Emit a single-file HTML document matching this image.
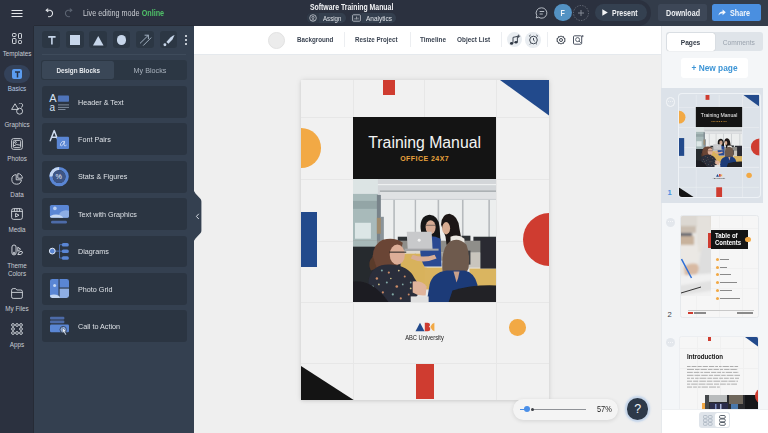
<!DOCTYPE html>
<html><head><meta charset="utf-8">
<style>
*{box-sizing:border-box;margin:0;padding:0}
html,body{width:768px;height:433px;overflow:hidden;background:#ececec;font-family:"Liberation Sans",sans-serif}
.a{position:absolute}
.t{position:absolute;white-space:nowrap;line-height:1}
.sx{display:inline-block;transform-origin:0 50%}
#top{left:0;top:0;width:768px;height:26px;background:#333c4a}
#topl{left:-20px;top:0;width:671px;height:26px;background:#2b313f;border-radius:0 13px 13px 0}
#side{left:0;top:26px;width:34px;height:407px;background:#2b313f}
#panel{left:34px;top:26px;width:160px;height:407px;background:#344050}
#toolbar{left:194px;top:26px;width:467px;height:29px;background:#fff;border-bottom:1px solid #e5e9ed}
#canvas{left:194px;top:55px;width:467px;height:378px;background:#efefef}
#right{left:661px;top:26px;width:107px;height:407px;background:#f4f6f8;border-left:1px solid #e6e9ec}
</style></head><body>
<div id="top" class="a"></div>
<div id="topl" class="a"></div>

<!-- TOP BAR -->
<svg class="a" style="left:11px;top:9px" width="12" height="9" viewBox="0 0 12 9"><g stroke="#e4e7eb" stroke-width="1"><line x1="0.5" y1="1.5" x2="11.5" y2="1.5"/><line x1="0.5" y1="4.5" x2="11.5" y2="4.5"/><line x1="0.5" y1="7.5" x2="11.5" y2="7.5"/></g></svg>
<svg class="a" style="left:45px;top:8px" width="10" height="10" viewBox="0 0 10 10"><path d="M1.5 2.2 H5.2 A3.2 3.2 0 1 1 3.2 8.6" fill="none" stroke="#e3e6ea" stroke-width="1.1"/><path d="M3.2 0.6 L1.2 2.2 L3.2 3.8" fill="none" stroke="#e3e6ea" stroke-width="1.1"/></svg>
<svg class="a" style="left:63px;top:8px" width="10" height="10" viewBox="0 0 10 10"><path d="M8.5 2.2 H4.8 A3.2 3.2 0 1 0 6.8 8.6" fill="none" stroke="#5d6573" stroke-width="1.1"/><path d="M6.8 0.6 L8.8 2.2 L6.8 3.8" fill="none" stroke="#5d6573" stroke-width="1.1"/></svg>
<div class="t" style="left:82.5px;top:9.2px;font-size:8.5px;color:#c9ccd2"><span class="sx" style="transform:scaleX(0.85)">Live editing mode <b style="color:#4fbf68;font-weight:700">Online</b></span></div>
<div class="t" style="left:309.5px;top:4px;font-size:8.2px;font-weight:700;color:#f2f3f5"><span class="sx" style="transform:scaleX(0.84)">Software Training Manual</span></div>
<div class="a" style="left:307px;top:13px;width:39px;height:10px;border-radius:5px;background:#343f4e"></div>
<div class="a" style="left:307px;top:13px;width:12px;height:10px;border-radius:5px 0 0 5px;background:#2f3947"></div>
<svg class="a" style="left:309px;top:14px" width="8" height="8" viewBox="0 0 8 8"><circle cx="4" cy="4" r="3.3" fill="none" stroke="#c8ccd3" stroke-width="0.8"/><circle cx="4" cy="3.4" r="1.1" fill="none" stroke="#c8ccd3" stroke-width="0.7"/><path d="M2.4 6.4 Q4 4.6 5.6 6.4" fill="none" stroke="#c8ccd3" stroke-width="0.7"/></svg>
<div class="t" style="left:322.5px;top:15px;font-size:7.4px;color:#dfe2e7"><span class="sx" style="transform:scaleX(0.83)">Assign</span></div>
<div class="a" style="left:350px;top:13px;width:46px;height:10px;border-radius:5px;background:#343f4e"></div>
<div class="a" style="left:350px;top:13px;width:12px;height:10px;border-radius:5px 0 0 5px;background:#2f3947"></div>
<svg class="a" style="left:352px;top:14px" width="9" height="8" viewBox="0 0 9 8"><rect x="0.6" y="0.8" width="7.8" height="6.4" rx="0.8" fill="none" stroke="#c8ccd3" stroke-width="0.8"/><path d="M3 5.5V4 M4.5 5.5V2.6 M6 5.5V3.6" stroke="#c8ccd3" stroke-width="0.7"/></svg>
<div class="t" style="left:365.8px;top:15px;font-size:7.4px;color:#dfe2e7"><span class="sx" style="transform:scaleX(0.88)">Analytics</span></div>
<svg class="a" style="left:535px;top:6.5px" width="13" height="12" viewBox="0 0 13 12"><path d="M6.5 0.8 A5.2 5.2 0 1 1 3.6 10.2 L1.2 11 L1.8 8.6 A5.2 5.2 0 0 1 6.5 0.8Z" fill="none" stroke="#c3c8d0" stroke-width="0.9"/><path d="M4.6 4.5H9.2 M4.6 7H7.8" stroke="#c3c8d0" stroke-width="0.9"/></svg>
<div class="a" style="left:554.1px;top:3.9px;width:17.5px;height:17.5px;border-radius:50%;background:#5392c3"></div>
<div class="t" style="left:554.1px;top:9.2px;width:17.5px;text-align:center;font-size:8.3px;font-weight:700;color:#eef3f8"><span class="sx" style="transform:scaleX(0.85);transform-origin:50% 50%">F</span></div>
<svg class="a" style="left:573px;top:5px" width="16" height="16" viewBox="0 0 16 16"><circle cx="8" cy="8" r="7.5" fill="none" stroke="#767c87" stroke-width="0.9" stroke-dasharray="1.2 1.4"/><path d="M8 5V11M5 8H11" stroke="#858b96" stroke-width="1"/></svg>
<div class="a" style="left:594.5px;top:3.8px;width:52px;height:17.4px;border-radius:9px;background:#344050"></div>
<svg class="a" style="left:602px;top:9px" width="6" height="7" viewBox="0 0 6 7"><path d="M0.3 0.2 L5.8 3.5 L0.3 6.8Z" fill="#f4f5f7"/></svg>
<div class="t" style="left:612.2px;top:9px;font-size:8.4px;font-weight:700;color:#eef0f3"><span class="sx" style="transform:scaleX(0.83)">Present</span></div>
<div class="a" style="left:658px;top:4px;width:49px;height:17.2px;border-radius:2.5px;background:#3d4757"></div>
<div class="t" style="left:665.6px;top:9px;font-size:8.4px;font-weight:700;color:#eef0f3"><span class="sx" style="transform:scaleX(0.85)">Download</span></div>
<div class="a" style="left:711.5px;top:4px;width:49.2px;height:17.3px;border-radius:2.5px;background:#4a8fe0"></div>
<svg class="a" style="left:717.5px;top:9px" width="8" height="7" viewBox="0 0 8 7"><path d="M0.4 6.4 Q1.2 2.6 4.6 2.4 V0.4 L7.8 3.3 L4.6 6.2 V4.2 Q2 4.2 0.4 6.4Z" fill="#f3f7fc"/></svg>
<div class="t" style="left:729.7px;top:9px;font-size:8.4px;font-weight:700;color:#f3f7fc"><span class="sx" style="transform:scaleX(0.86)">Share</span></div>
<div id="side" class="a"></div>
<div id="panel" class="a"></div>

<!-- SIDEBAR -->
<div class="a" style="left:33px;top:26px;width:1px;height:407px;background:#262b36"></div>
<div class="a" style="left:34px;top:25px;width:160px;height:1px;background:#262b36"></div>
<svg class="a" style="left:11px;top:32px" width="13" height="13" viewBox="0 0 13 13"><g fill="none" stroke="#d5d9df" stroke-width="1"><rect x="1.5" y="1.5" width="3.5" height="3" rx="0.7"/><rect x="7.5" y="1.5" width="3" height="5" rx="0.7"/><rect x="1.5" y="6.5" width="3.5" height="5" rx="0.7"/><rect x="7.5" y="8.5" width="3" height="3" rx="0.7"/></g></svg>
<div class="t" style="left:0;top:51px;width:34px;text-align:center;font-size:6.3px;color:#c9cdd4">Templates</div>
<div class="a" style="left:4.2px;top:64.6px;width:25.4px;height:18px;border-radius:9px;background:#34425a"></div>
<div class="a" style="left:11.8px;top:68.8px;width:10.4px;height:10.2px;border-radius:2px;background:#5b9cf0"></div>
<svg class="a" style="left:11.8px;top:68.8px" width="11" height="11" viewBox="0 0 11 11"><path d="M3 3H8 M5.5 3V8.4" stroke="#263349" stroke-width="1.5"/></svg>
<div class="t" style="left:0;top:85.9px;width:34px;text-align:center;font-size:6.3px;color:#b6c9e4">Basics</div>
<svg class="a" style="left:11px;top:102.5px" width="13" height="12" viewBox="0 0 13 12"><g fill="none" stroke="#d5d9df" stroke-width="0.9"><path d="M4 0.8 L7.4 6.4 H0.6Z"/><circle cx="8.6" cy="8.2" r="3"/><path d="M7.8 0.8 a2.2 2.2 0 1 1 2.2 3.6"/></g></svg>
<div class="t" style="left:0;top:121.6px;width:34px;text-align:center;font-size:6.3px;color:#c9cdd4">Graphics</div>
<svg class="a" style="left:11px;top:138px" width="12" height="12" viewBox="0 0 12 12"><g fill="none" stroke="#d5d9df" stroke-width="0.9"><rect x="0.6" y="0.6" width="10.8" height="10.8" rx="2"/><rect x="2.4" y="2.4" width="7.2" height="7.2" rx="1"/><circle cx="4.4" cy="4.4" r="0.9"/><path d="M2.4 8 Q5 5.6 9.6 7.2"/></g></svg>
<div class="t" style="left:0;top:156.3px;width:34px;text-align:center;font-size:6.3px;color:#c9cdd4">Photos</div>
<svg class="a" style="left:11px;top:173px" width="12" height="12" viewBox="0 0 12 12"><g fill="none" stroke="#d5d9df" stroke-width="0.9"><path d="M5.2 1.6 A4.8 4.8 0 1 0 10.4 6.8 H5.2Z"/><path d="M6.8 0.6 A4.6 4.6 0 0 1 11.4 5.2 H6.8Z"/></g></svg>
<div class="t" style="left:0;top:191.9px;width:34px;text-align:center;font-size:6.3px;color:#c9cdd4">Data</div>
<svg class="a" style="left:11px;top:208px" width="12" height="12" viewBox="0 0 12 12"><g fill="none" stroke="#d5d9df" stroke-width="0.9"><rect x="0.6" y="0.6" width="10.8" height="10.8" rx="2"/><path d="M0.6 3.4H11.4 M3.4 0.6V3.4 M6 0.6V3.4 M8.6 0.6V3.4"/><path d="M4.6 5.4 L8 7.2 L4.6 9Z"/></g></svg>
<div class="t" style="left:0;top:226.8px;width:34px;text-align:center;font-size:6.3px;color:#c9cdd4">Media</div>
<svg class="a" style="left:11px;top:244px" width="13" height="12" viewBox="0 0 13 12"><g fill="none" stroke="#d5d9df" stroke-width="0.95"><rect x="0.95" y="1" width="4.1" height="9.9" rx="2"/><circle cx="3" cy="9" r="0.8"/><path d="M6.8 3.2 L9.6 5.2 L6.8 7.4Z"/><path d="M6.8 10.6 Q7.6 7.6 10 7.2 Q11.8 7.3 11.4 9.2 Q10.6 10.9 6.8 10.6Z"/></g></svg>
<div class="t" style="left:0;top:262.8px;width:34px;text-align:center;font-size:6.3px;color:#c9cdd4">Theme</div>
<div class="t" style="left:0;top:271.2px;width:34px;text-align:center;font-size:6.3px;color:#c9cdd4">Colors</div>
<svg class="a" style="left:11px;top:287.5px" width="12" height="11" viewBox="0 0 12 11"><g fill="none" stroke="#d5d9df" stroke-width="0.9"><path d="M0.6 2.2 Q0.6 0.6 2.2 0.6 H4.6 L5.8 2 H9.8 Q11.4 2 11.4 3.6 V8.8 Q11.4 10.4 9.8 10.4 H2.2 Q0.6 10.4 0.6 8.8Z"/><path d="M0.6 4.4H11.4"/></g></svg>
<div class="t" style="left:0;top:306.3px;width:34px;text-align:center;font-size:6.3px;color:#c9cdd4">My Files</div>
<svg class="a" style="left:11.3px;top:322.8px" width="12" height="12" viewBox="0 0 12 12"><g fill="none" stroke="#d5d9df" stroke-width="0.9"><circle cx="2" cy="2" r="1.4"/><circle cx="6" cy="2" r="1.4"/><circle cx="10" cy="2" r="1.4"/><circle cx="2" cy="6" r="1.4"/><circle cx="10" cy="6" r="1.4"/><circle cx="2" cy="10" r="1.4"/><circle cx="6" cy="10" r="1.4"/><circle cx="10" cy="10" r="1.4"/></g></svg>
<div class="t" style="left:0;top:341.6px;width:34px;text-align:center;font-size:6.3px;color:#c9cdd4">Apps</div>

<!-- PANEL -->
<div class="a" style="left:42.3px;top:31.2px;width:17.7px;height:17.2px;border-radius:3px;background:#2c3744"></div>
<div class="a" style="left:65.9px;top:31.2px;width:17.7px;height:17.2px;border-radius:3px;background:#2c3744"></div>
<div class="a" style="left:89.4px;top:31.2px;width:17.7px;height:17.2px;border-radius:3px;background:#2c3744"></div>
<div class="a" style="left:112.8px;top:31.2px;width:17.7px;height:17.2px;border-radius:3px;background:#2c3744"></div>
<div class="a" style="left:136.3px;top:31.2px;width:17.7px;height:17.2px;border-radius:3px;background:#2c3744"></div>
<div class="a" style="left:159.8px;top:31.2px;width:17.7px;height:17.2px;border-radius:3px;background:#2c3744"></div>
<svg class="a" style="left:47.5px;top:35.5px" width="8" height="9" viewBox="0 0 8 9"><path d="M0.2 0.9H7.6 M3.9 0.9V8.5" stroke="#c7d6ea" stroke-width="1.6"/></svg>
<div class="a" style="left:69.6px;top:35.3px;width:10.2px;height:9.6px;background:#c7d6ea"></div>
<svg class="a" style="left:92.9px;top:35.5px" width="11" height="10" viewBox="0 0 11 10"><path d="M5.25 0 L10.5 9.4 H0Z" fill="#c7d6ea"/></svg>
<div class="a" style="left:116.6px;top:35.1px;width:9.8px;height:9.8px;border-radius:50%;background:#c7d6ea"></div>
<svg class="a" style="left:138.5px;top:33.5px" width="14" height="13" viewBox="0 0 14 13"><g stroke="#aebccd" stroke-width="0.9" fill="none"><path d="M1 9.4 L9.4 1.2"/><path d="M5.6 1.2 H9.4 V5"/><path d="M4.2 11.6 L12.2 3.6"/></g></svg>
<svg class="a" style="left:162.5px;top:34.5px" width="12" height="12" viewBox="0 0 12 12"><path d="M3.36 6.96 L7.38 2.52 Q10 0.6 11.6 0.1 Q11 1.6 9.46 4.4 L5.44 8.84Z" fill="#c7d6ea"/><circle cx="1.9" cy="9.7" r="1.45" fill="#c7d6ea"/></svg>
<div class="a" style="left:185px;top:35.2px;width:2px;height:2px;background:#c2c8d0"></div>
<div class="a" style="left:185px;top:38.9px;width:2px;height:2px;background:#c2c8d0"></div>
<div class="a" style="left:185px;top:42.9px;width:2px;height:2px;background:#c2c8d0"></div>
<div class="a" style="left:42px;top:53.5px;width:144px;height:1px;background:#3e4b5b"></div>
<div class="a" style="left:41.3px;top:60px;width:145.7px;height:20.2px;border-radius:3px;background:#2c3744"></div>
<div class="a" style="left:42.3px;top:61px;width:72px;height:18.2px;border-radius:2.5px;background:#3a4757"></div>
<div class="t" style="left:42.3px;top:67.2px;width:72px;text-align:center;font-size:7.9px;font-weight:700;color:#e8ebef"><span class="sx" style="transform:scaleX(0.8);transform-origin:50% 50%">Design Blocks</span></div>
<div class="t" style="left:114.3px;top:67.2px;width:72px;text-align:center;font-size:7.9px;color:#aab3be"><span class="sx" style="transform:scaleX(0.91);transform-origin:50% 50%">My Blocks</span></div>
<div class="a" style="left:41.5px;top:86.10px;width:145px;height:31.8px;border-radius:3px;background:#2b3542"></div>
<div class="t" style="left:78.4px;top:98.75px;font-size:8.1px;color:#dde1e6"><span class="sx" style="transform:scaleX(0.89)">Header &amp; Text</span></div>
<div class="a" style="left:41.5px;top:123.45px;width:145px;height:31.8px;border-radius:3px;background:#2b3542"></div>
<div class="t" style="left:78.4px;top:136.10px;font-size:8.1px;color:#dde1e6"><span class="sx" style="transform:scaleX(0.89)">Font Pairs</span></div>
<div class="a" style="left:41.5px;top:160.80px;width:145px;height:31.8px;border-radius:3px;background:#2b3542"></div>
<div class="t" style="left:78.4px;top:173.45px;font-size:8.1px;color:#dde1e6"><span class="sx" style="transform:scaleX(0.89)">Stats &amp; Figures</span></div>
<div class="a" style="left:41.5px;top:198.15px;width:145px;height:31.8px;border-radius:3px;background:#2b3542"></div>
<div class="t" style="left:78.4px;top:210.80px;font-size:8.1px;color:#dde1e6"><span class="sx" style="transform:scaleX(0.89)">Text with Graphics</span></div>
<div class="a" style="left:41.5px;top:235.50px;width:145px;height:31.8px;border-radius:3px;background:#2b3542"></div>
<div class="t" style="left:78.4px;top:248.15px;font-size:8.1px;color:#dde1e6"><span class="sx" style="transform:scaleX(0.89)">Diagrams</span></div>
<div class="a" style="left:41.5px;top:272.85px;width:145px;height:31.8px;border-radius:3px;background:#2b3542"></div>
<div class="t" style="left:78.4px;top:285.50px;font-size:8.1px;color:#dde1e6"><span class="sx" style="transform:scaleX(0.89)">Photo Grid</span></div>
<div class="a" style="left:41.5px;top:310.20px;width:145px;height:31.8px;border-radius:3px;background:#2b3542"></div>
<div class="t" style="left:78.4px;top:322.85px;font-size:8.1px;color:#dde1e6"><span class="sx" style="transform:scaleX(0.89)">Call to Action</span></div>

<svg class="a" style="left:44px;top:88px" width="30" height="30" viewBox="0 0 30 30">
<text x="5.2" y="13.6" font-family="Liberation Sans" font-size="11" fill="#d6e2f2">A</text>
<text x="5.6" y="22.6" font-family="Liberation Sans" font-size="10" fill="#d6e2f2">a</text>
<rect x="13.9" y="7.6" width="11.1" height="6.1" rx="0.8" fill="#4f74b9"/>
<rect x="14" y="16.4" width="11" height="1" fill="#7d8a9b"/><rect x="14" y="18.9" width="11" height="1" fill="#7d8a9b"/><rect x="14" y="21" width="7.5" height="1" fill="#7d8a9b"/>
</svg>
<svg class="a" style="left:44px;top:125px" width="30" height="30" viewBox="0 0 30 30">
<path d="M6.2 15.8 L10.2 5.6 L14.2 15.8 M7.6 12.3 H12.8" fill="none" stroke="#cfdcf0" stroke-width="1.45" stroke-linejoin="round" stroke-linecap="round"/>
<rect x="12.8" y="11.8" width="12.2" height="12.1" rx="1" fill="#5a86d4"/>
<path d="M21 16.4 Q18 15.4 16.6 18.6 Q15.8 21 17.4 20.8 Q19.2 20.4 20.4 16.8 Q19.6 20.4 20.6 20.8 Q21.4 21 22.6 20" fill="none" stroke="#e6eefa" stroke-width="0.7"/>
</svg>
<svg class="a" style="left:44px;top:162px" width="30" height="30" viewBox="0 0 30 30">
<circle cx="15.1" cy="14.6" r="8.1" fill="none" stroke="#5a86d4" stroke-width="3.2"/>
<path d="M15.1 6.5 A8.1 8.1 0 0 0 7 14.6" fill="none" stroke="#c5d7f1" stroke-width="3.2"/>
<circle cx="15.1" cy="14.6" r="6.4" fill="#3e5686"/>
<text x="11.4" y="17.4" font-family="Liberation Sans" font-size="7.2" fill="#e6eefa">%</text>
</svg>
<svg class="a" style="left:44px;top:199px" width="30" height="30" viewBox="0 0 30 30">
<defs><clipPath id="c4"><rect x="5.9" y="5.9" width="19.1" height="12.8" rx="1.6"/></clipPath></defs>
<rect x="5.9" y="5.9" width="19.1" height="12.8" rx="1.6" fill="#5a86d4"/>
<g clip-path="url(#c4)"><circle cx="10.9" cy="9.4" r="1.8" fill="#b9cdef"/><ellipse cx="22" cy="16.6" rx="7" ry="5.4" fill="#8eaee3"/><ellipse cx="12" cy="19.4" rx="7.2" ry="3.8" fill="#c5d7f1"/></g>
<rect x="7" y="21.8" width="16" height="2.8" rx="1.4" fill="#4d6ba8"/>
</svg>
<svg class="a" style="left:44px;top:236px" width="30" height="30" viewBox="0 0 30 30">
<path d="M11 15.1 H15.5 M15.5 8.7 V22 M15.5 8.7 H18 M15.5 15.2 H18 M15.5 22 H18" fill="none" stroke="#4f74b9" stroke-width="0.9"/>
<circle cx="8.3" cy="15.1" r="2.9" fill="#5a86d4" stroke="#e6eefa" stroke-width="1"/>
<rect x="17.8" y="7" width="7" height="3.6" rx="1.6" fill="#5a86d4"/>
<rect x="17.8" y="13.4" width="7" height="3.6" rx="1.6" fill="#5a86d4"/>
<rect x="17.8" y="20.2" width="7" height="3.6" rx="1.6" fill="#5a86d4"/>
</svg>
<svg class="a" style="left:44px;top:273px" width="30" height="30" viewBox="0 0 30 30">
<defs><clipPath id="c6"><rect x="5.9" y="5.9" width="19.1" height="19.1" rx="2.4"/></clipPath></defs>
<g clip-path="url(#c6)">
<rect x="5.9" y="5.9" width="8.6" height="19.1" fill="#5a86d4"/>
<rect x="15.6" y="5.9" width="9.4" height="8.6" fill="#5a86d4"/>
<rect x="15.6" y="15.6" width="9.4" height="9.4" fill="#8eaee3"/>
<circle cx="10.6" cy="12.6" r="1.5" fill="#c5d7f1"/>
<ellipse cx="10" cy="25" rx="6" ry="3.4" fill="#c5d7f1"/>
</g>
</svg>
<svg class="a" style="left:44px;top:311px" width="30" height="30" viewBox="0 0 30 30">
<rect x="6" y="5.8" width="14.4" height="2.6" rx="1" fill="#4d6ba8"/>
<rect x="6" y="9.6" width="14.4" height="2.6" rx="1" fill="#4d6ba8"/>
<rect x="6" y="13.6" width="19" height="7.6" rx="1.2" fill="#5a86d4"/>
<circle cx="19.2" cy="18.6" r="3.2" fill="#8eaee3" stroke="#2b3542" stroke-width="0.8"/>
<path d="M18.4 16.6 V22 L19.6 21 L21.4 24 L22.4 23.4 L20.8 20.4 L22.4 20.2Z" fill="#e6eefa" stroke="#2b3542" stroke-width="0.4"/>
</svg>


<div id="toolbar" class="a"></div>
<div id="canvas" class="a"></div>
<div id="right" class="a"></div>
<!-- TOOLBAR -->
<div class="a" style="left:268.4px;top:31.5px;width:17px;height:17px;border-radius:50%;background:#ececec;border:1px solid #e2e2e2"></div>
<div class="t" style="left:296.9px;top:36.2px;font-size:8px;font-weight:700;color:#3b4452"><span class="sx" style="transform:scaleX(0.78)">Background</span></div>
<div class="a" style="left:344.4px;top:32px;width:1px;height:15px;background:#eceef1"></div>
<div class="t" style="left:355.4px;top:36.2px;font-size:8px;font-weight:700;color:#3b4452"><span class="sx" style="transform:scaleX(0.777)">Resize Project</span></div>
<div class="a" style="left:409.5px;top:32px;width:1px;height:15px;background:#eceef1"></div>
<div class="t" style="left:420.3px;top:36.2px;font-size:8px;font-weight:700;color:#3b4452"><span class="sx" style="transform:scaleX(0.805)">Timeline</span></div>
<div class="t" style="left:457px;top:36.2px;font-size:8px;font-weight:700;color:#3b4452"><span class="sx" style="transform:scaleX(0.8)">Object List</span></div>
<div class="a" style="left:501px;top:32px;width:1px;height:15px;background:#eceef1"></div>
<div class="a" style="left:507px;top:32px;width:15.4px;height:15.4px;border-radius:50%;background:#e9edf1"></div>
<svg class="a" style="left:508.8px;top:33.6px" width="12" height="12" viewBox="0 0 12 12"><g fill="#2f3743"><ellipse cx="2.6" cy="9.4" rx="1.6" ry="1.3"/><ellipse cx="7" cy="8.2" rx="1.6" ry="1.3"/></g><path d="M4 9.2V3.4 L8.4 2.4 V8" fill="none" stroke="#2f3743" stroke-width="0.9"/><path d="M9.6 0.6V3.8M8 2.2H11.2" stroke="#2f3743" stroke-width="0.8"/></svg>
<div class="a" style="left:525.3px;top:32px;width:15.6px;height:15.6px;border-radius:50%;background:#e9edf1"></div>
<svg class="a" style="left:527.5px;top:34px" width="11" height="11" viewBox="0 0 11 11"><circle cx="5.5" cy="6" r="3.8" fill="none" stroke="#2f3743" stroke-width="0.9"/><path d="M5.5 4V6.2L6.8 7.2 M1 2.4 L2.6 1 M10 2.4 L8.4 1 M2.8 9.6 L2 10.4 M8.2 9.6 L9 10.4" fill="none" stroke="#2f3743" stroke-width="0.9"/></svg>
<div class="a" style="left:546.5px;top:32px;width:1px;height:15px;background:#eceef1"></div>
<svg class="a" style="left:555.5px;top:35px" width="10" height="10" viewBox="0 0 10 10"><path d="M5 0.8 L6 1.9 L7.5 1.6 L7.8 3.1 L9.2 3.8 L8.5 5 L9.2 6.2 L7.8 6.9 L7.5 8.4 L6 8.1 L5 9.2 L4 8.1 L2.5 8.4 L2.2 6.9 L0.8 6.2 L1.5 5 L0.8 3.8 L2.2 3.1 L2.5 1.6 L4 1.9Z" fill="none" stroke="#2f3743" stroke-width="0.9"/><circle cx="5" cy="5" r="1.5" fill="none" stroke="#2f3743" stroke-width="0.9"/></svg>
<svg class="a" style="left:573px;top:35px" width="11" height="10" viewBox="0 0 11 10"><rect x="0.5" y="0.8" width="8.2" height="8.4" rx="1" fill="none" stroke="#4a5260" stroke-width="1"/><circle cx="4.6" cy="4.6" r="2" fill="none" stroke="#4a5260" stroke-width="0.9"/><path d="M6 6 L7.8 7.8" stroke="#4a5260" stroke-width="0.9"/><path d="M9.6 0V2.2M8.5 1.1H10.7" stroke="#4a5260" stroke-width="0.7"/></svg>
<!-- PAGE -->
<div class="a" style="left:301px;top:79.5px;width:248px;height:320px;box-shadow:0 0 6px rgba(0,0,0,0.10),0 1px 3px rgba(0,0,0,0.08)"><div style="position:absolute;left:0;top:0;width:248px;height:320px;background:#f1f1f1;overflow:hidden">
<div style="position:absolute;left:52px;top:0;width:1px;height:320px;background:#e7e7e7"></div>
<div style="position:absolute;left:122.8px;top:0;width:1px;height:37px;background:#e7e7e7"></div>
<div style="position:absolute;left:195.3px;top:0;width:1px;height:320px;background:#e7e7e7"></div>
<div style="position:absolute;left:0;top:37px;width:248px;height:1px;background:#e7e7e7"></div>
<div style="position:absolute;left:0;top:99px;width:248px;height:1px;background:#e7e7e7"></div>
<div style="position:absolute;left:0;top:161px;width:248px;height:1px;background:#e7e7e7"></div>
<div style="position:absolute;left:0;top:222.4px;width:248px;height:1px;background:#e7e7e7"></div>
<div style="position:absolute;left:0;top:283.6px;width:248px;height:1px;background:#e7e7e7"></div>
<div style="position:absolute;left:82px;top:0;width:12px;height:15.3px;background:#cf3c30"></div>
<svg style="position:absolute;left:199px;top:0" width="49" height="36" viewBox="0 0 49 36"><path d="M0 0H49V35.5Z" fill="#224a8c"/></svg>
<div style="position:absolute;left:-19.8px;top:48.5px;width:39.6px;height:39.6px;border-radius:50%;background:#f2a945"></div>
<div style="position:absolute;left:0;top:132.7px;width:16px;height:55.3px;background:#224a8c"></div>
<div style="position:absolute;left:221.5px;top:133.8px;width:53px;height:53px;border-radius:50%;background:#cf3c30"></div>
<div style="position:absolute;left:208.1px;top:239.5px;width:16.6px;height:16.6px;border-radius:50%;background:#f2a945"></div>
<div style="position:absolute;left:114.6px;top:284.6px;width:18.4px;height:35.4px;background:#cf3c30"></div>
<svg style="position:absolute;left:0;top:286px" width="53" height="34" viewBox="0 0 53 34"><path d="M0 0L52.7 34H0Z" fill="#141414"/></svg>
<div style="position:absolute;left:52px;top:37px;width:143.3px;height:62px;background:#141414"></div>
<div style="position:absolute;left:52px;top:55.4px;width:143.3px;text-align:center;white-space:nowrap;font-size:15.8px;line-height:1;color:#f4f4f4">Training Manual</div>
<div style="position:absolute;left:52px;top:75.6px;width:143.3px;text-align:center;white-space:nowrap;font-size:7px;font-weight:700;letter-spacing:0.45px;line-height:1;color:#e9a23c">OFFICE 24X7</div>
<div style="position:absolute;left:52px;top:99px;width:143.3px;height:123.4px;overflow:hidden"><svg width="143.3" height="123.4" viewBox="0 0 144 124" preserveAspectRatio="none" style="position:absolute;left:0;top:0">
<defs><filter id="pbm" x="-5%" y="-5%" width="110%" height="110%"><feGaussianBlur stdDeviation="0.55"/></filter></defs>
<g filter="url(#pbm)">
<rect width="144" height="124" fill="#e6e8e9"/>
<rect x="0" y="0" width="144" height="20" fill="#d3d6d9"/>
<rect x="20" y="5" width="124" height="1.2" fill="#eef0f1"/>
<rect x="27" y="11.5" width="117" height="1.6" fill="#a9adb1"/>
<rect x="27" y="13" width="117" height="8" fill="#e0e2e4"/>
<rect x="27" y="20" width="117" height="1.2" fill="#c9ccd0"/>
<rect x="27" y="21" width="117" height="55" fill="#eceeee"/>
<g fill="#b6babd"><rect x="40.5" y="21" width="1.6" height="55"/><rect x="62" y="21" width="1.4" height="55"/><rect x="85" y="21" width="1.6" height="55"/><rect x="109.5" y="21" width="1.6" height="55"/><rect x="136" y="21" width="1.6" height="55"/></g>
<rect x="0" y="0" width="25" height="15" fill="#dce4e4"/>
<rect x="0" y="15" width="25" height="48" fill="#a8baba"/>
<rect x="0" y="22" width="25" height="8" fill="#93a5a6"/>
<rect x="2" y="44" width="16" height="16" fill="#dce6e6"/>
<rect x="24" y="16" width="4" height="58" fill="#78838a"/>
<rect x="24" y="39" width="6" height="16" fill="#9e8a6c"/>
<rect x="28" y="38" width="3" height="34" fill="#8a9399"/>
<rect x="45" y="58" width="10" height="10" fill="#2d3035"/>
<rect x="109" y="57" width="9" height="8" fill="#2d3035"/>
<rect x="121" y="58" width="23" height="9" fill="#2a2d33"/>
<rect x="0" y="62" width="144" height="12" fill="#8f8e8a"/>
<rect x="0" y="66" width="48" height="44" fill="#27292e"/>
<rect x="0" y="62" width="24" height="6" fill="#a7b8b8"/>
<rect x="84" y="74" width="40" height="8" fill="#a6a29a"/>
<rect x="48" y="72" width="26" height="3" fill="#dcd8cf"/>
<rect x="48" y="75" width="26" height="32" fill="#d8b25b"/>
<rect x="72" y="87" width="18" height="2" fill="#e8e4da"/>
<rect x="72" y="89" width="18" height="22" fill="#d9b35e"/>
<rect x="117" y="88" width="27" height="2" fill="#e8e4da"/>
<rect x="117" y="90" width="27" height="19" fill="#dab560"/>
<rect x="114" y="74" width="14" height="15" fill="#c9c5bd"/><rect x="128" y="60" width="16" height="30" fill="#292b30"/>
<rect x="108" y="72" width="10" height="14" fill="#3a3c40"/>
<!-- standing woman 1 -->
<path d="M68 50 Q67 37 77 36 Q86 37 87 48 L88 62 L70 64Z" fill="#161616"/>
<ellipse cx="78" cy="48.5" rx="5" ry="7" fill="#d6ab94"/>
<path d="M73 46.5 H83.5" stroke="#333" stroke-width="0.6"/>
<path d="M68 60 Q78 55 88 60 L89 88 L72 88 Q66 80 68 60Z" fill="#2a4a92"/>
<path d="M60 76 Q70 80 82 76 L84 80 Q70 86 58 80Z" fill="#d9ae96"/>
<!-- standing woman 2 -->
<path d="M88.5 46 Q89 35 97 35 Q106 37 107 50 L110 66 L94 66 L93 58Z" fill="#1d1613"/>
<ellipse cx="93.6" cy="49.5" rx="4" ry="6.2" fill="#d9ad92"/>
<path d="M98 58 Q106 55 112 60 L112 74 L98 74Z" fill="#ece8e2"/>
<!-- laptop -->
<path d="M54 53 L79 53 L80 71 L55 71Z" fill="#c8c9cb"/>
<rect x="52" y="70" width="34" height="2" fill="#a4a6a9"/>
<circle cx="66.5" cy="61.5" r="1.5" fill="#f2f2f2"/>
<!-- seated woman left -->
<path d="M20 84 Q18 66 30 61 Q42 58 50 64 L44 90 L24 94Z" fill="#6b4434"/>
<path d="M20 78 Q14 84 18 92 L24 90Z" fill="#5a3a2c"/>
<ellipse cx="44.5" cy="76" rx="7.6" ry="10.2" fill="#dcae98"/>
<path d="M36.5 73.5 H53.5" stroke="#1e1e1e" stroke-width="1"/>
<path d="M14 124 L16 100 Q20 85 38 86 Q56 87 62 100 L66 106 Q68 114 64 118 L60 124Z" fill="#2b2d3a"/>
<path d="M60 103 Q70 102 74 108 L73 117 Q66 118 60 114Z" fill="#e0b49c"/>
<g fill="#c98a66"><circle cx="24" cy="100" r="1.2"/><circle cx="36" cy="94" r="1.1"/><circle cx="44" cy="108" r="1.3"/><circle cx="30" cy="114" r="1.1"/><circle cx="52" cy="98" r="1"/><circle cx="56" cy="116" r="1"/><circle cx="20" cy="120" r="1"/><circle cx="48" cy="120" r="1.1"/></g>
<g fill="#7fa7a4"><circle cx="29" cy="92" r="1"/><circle cx="40" cy="116" r="1.1"/><circle cx="50" cy="106" r="0.9"/><circle cx="20" cy="108" r="1"/><circle cx="58" cy="104" r="0.9"/><circle cx="34" cy="104" r="1"/></g>
<g fill="#cfc38a"><circle cx="46" cy="92" r="0.9"/><circle cx="26" cy="106" r="0.9"/><circle cx="58" cy="110" r="0.9"/><circle cx="38" cy="100" r="0.8"/><circle cx="32" cy="121" r="0.9"/></g>
<!-- seated woman right -->
<path d="M90 94 Q88 70 97 63 Q106 58 114 66 Q118 76 116 90 L113 96 L94 98Z" fill="#6e5a4d"/>
<path d="M74 124 L77 106 Q80 94 94 92 L112 92 Q122 94 125 106 L127 124Z" fill="#1f3a78"/>
<path d="M101 93 Q103 100 104 104 Q106 100 107 93Z" fill="#c9a08a"/>
<!-- chairs -->
<path d="M0 103 Q20 101 36 124 L0 124Z" fill="#1d1e22"/>
<path d="M100 112 Q120 106 144 107 L144 124 L96 124Z" fill="#202125"/>
<rect x="58" y="118" width="18" height="6" fill="#e0e0e0"/>
</g>
</svg></div>
<svg style="position:absolute;left:113px;top:242.5px" width="22" height="10" viewBox="0 0 22 10"><path d="M1.5 9.2 L6 0.8 L10.5 9.2Z" fill="#224a8c"/><path d="M10.8 0.8 H13.6 Q16 0.8 16 2.8 Q16 4.2 14.8 4.8 Q16.3 5.3 16.3 7 Q16.3 9.2 13.8 9.2 H10.8Z" fill="#cf3c30"/><path d="M20.4 0.8 V9.2 Q17.8 8.6 16.3 5 Q17.8 1.4 20.4 0.8Z" fill="#f2a945"/></svg>
<div style="position:absolute;left:52px;top:255.2px;width:143.3px;text-align:center;white-space:nowrap;font-size:6.7px;line-height:1;color:#222"><span style="display:inline-block;transform:scaleX(0.86)">ABC University</span></div>
</div></div>
<!-- ZOOM -->
<div class="a" style="left:513px;top:399.4px;width:104.5px;height:20.8px;border-radius:10.4px;background:#f4f4f4;box-shadow:0 1px 4px rgba(0,0,0,0.12)"></div>
<div class="a" style="left:520px;top:408.8px;width:6px;height:1.2px;background:#4a8fe8"></div>
<div class="a" style="left:523.5px;top:406.2px;width:6.3px;height:6.3px;border-radius:50%;background:#4a8fe8"></div>
<div class="a" style="left:532px;top:408.9px;width:54px;height:0.8px;background:#909398"></div>
<div class="a" style="left:530.7px;top:407.7px;width:3px;height:3px;border-radius:50%;background:#3d4046"></div>
<div class="t" style="left:596.6px;top:405.2px;font-size:8.8px;color:#1e1e1e"><span class="sx" style="transform:scaleX(0.84)">57%</span></div>
<div class="a" style="left:626.9px;top:398.2px;width:21.5px;height:21.5px;border-radius:50%;background:#2d3949;box-shadow:0 0 0 1.6px #c8d7ea,0 0 1.5px 2.4px rgba(190,210,235,0.6)"></div>
<div class="t" style="left:626.9px;top:403.4px;width:21.5px;text-align:center;font-size:12.5px;color:#f2f4f7">?</div>

<!-- collapse tab -->
<svg class="a" style="left:193px;top:188px" width="12" height="56" viewBox="0 0 12 56"><path d="M0 0 Q1 4 2.5 5.5 L7.6 11 Q8.4 12 8.4 13.5 V42.5 Q8.4 44 7.6 45 L2.5 50.5 Q1 52 0 56Z" fill="#344050"/><path d="M5.8 25.8 L3.4 28.4 L5.8 31" fill="none" stroke="#d2d8e0" stroke-width="1"/></svg>

<!-- RIGHT PANEL -->
<div class="a" style="left:665.6px;top:31.6px;width:97.8px;height:19.8px;border-radius:3px;background:#dfe4e9"></div>
<div class="a" style="left:666.5px;top:32.5px;width:48.5px;height:18.5px;border-radius:2.5px;background:#ffffff;box-shadow:0 0 1px rgba(0,0,0,0.25)"></div>
<div class="t" style="left:666.5px;top:38.8px;width:48.5px;text-align:center;font-size:7.8px;font-weight:700;color:#333b47"><span class="sx" style="transform:scaleX(0.85);transform-origin:50% 50%">Pages</span></div>
<div class="t" style="left:715px;top:38.8px;width:48.5px;text-align:center;font-size:7.8px;color:#9aa3ae"><span class="sx" style="transform:scaleX(0.85);transform-origin:50% 50%">Comments</span></div>
<div class="a" style="left:681px;top:58.2px;width:67.2px;height:20.2px;border-radius:3px;background:#ffffff"></div>
<div class="t" style="left:681px;top:63.4px;width:67.2px;text-align:center;font-size:9.6px;font-weight:700;color:#3d95d6"><span class="sx" style="transform:scaleX(0.87);transform-origin:50% 50%">+ New page</span></div>
<div class="a" style="left:661.4px;top:88.2px;width:101.4px;height:115.2px;background:#dce2e9"></div>
<div class="a" style="left:665.5px;top:97.2px;width:9.4px;height:9.4px;border-radius:50%;border:1px solid #f4f6f8"></div>
<div class="a" style="left:667.6px;top:101.3px;width:1.1px;height:1.1px;border-radius:50%;background:#f4f6f8"></div><div class="a" style="left:669.7px;top:101.3px;width:1.1px;height:1.1px;border-radius:50%;background:#f4f6f8"></div><div class="a" style="left:671.8px;top:101.3px;width:1.1px;height:1.1px;border-radius:50%;background:#f4f6f8"></div>
<div class="t" style="left:667.4px;top:189.2px;font-size:7.6px;font-weight:700;color:#4a8fe0">1</div>
<div class="a" style="left:679.4px;top:94.3px;width:80.3px;height:103.2px;border-radius:3px;box-shadow:0 0 0 1px #eef2f6;overflow:hidden;background:#dce2e9">
<div style="position:absolute;left:0;top:0.4px;width:248px;height:320px;transform:scale(0.3238);transform-origin:0 0"><div style="position:absolute;left:0;top:0;width:248px;height:320px;background:transparent;overflow:hidden">
<div style="position:absolute;left:52px;top:0;width:2.2px;height:320px;background:#e9edf1"></div>
<div style="position:absolute;left:122.8px;top:0;width:2.2px;height:37px;background:#e9edf1"></div>
<div style="position:absolute;left:195.3px;top:0;width:2.2px;height:320px;background:#e9edf1"></div>
<div style="position:absolute;left:0;top:37px;width:248px;height:2.2px;background:#e9edf1"></div>
<div style="position:absolute;left:0;top:99px;width:248px;height:2.2px;background:#e9edf1"></div>
<div style="position:absolute;left:0;top:161px;width:248px;height:2.2px;background:#e9edf1"></div>
<div style="position:absolute;left:0;top:222.4px;width:248px;height:2.2px;background:#e9edf1"></div>
<div style="position:absolute;left:0;top:283.6px;width:248px;height:2.2px;background:#e9edf1"></div>
<div style="position:absolute;left:82px;top:0;width:12px;height:15.3px;background:#cf3c30"></div>
<svg style="position:absolute;left:199px;top:0" width="49" height="36" viewBox="0 0 49 36"><path d="M0 0H49V35.5Z" fill="#224a8c"/></svg>
<div style="position:absolute;left:-19.8px;top:48.5px;width:39.6px;height:39.6px;border-radius:50%;background:#f2a945"></div>
<div style="position:absolute;left:0;top:132.7px;width:16px;height:55.3px;background:#224a8c"></div>
<div style="position:absolute;left:221.5px;top:133.8px;width:53px;height:53px;border-radius:50%;background:#cf3c30"></div>
<div style="position:absolute;left:208.1px;top:239.5px;width:16.6px;height:16.6px;border-radius:50%;background:#f2a945"></div>
<div style="position:absolute;left:114.6px;top:284.6px;width:18.4px;height:35.4px;background:#cf3c30"></div>
<svg style="position:absolute;left:0;top:286px" width="53" height="34" viewBox="0 0 53 34"><path d="M0 0L52.7 34H0Z" fill="#141414"/></svg>
<div style="position:absolute;left:52px;top:37px;width:143.3px;height:62px;background:#141414"></div>
<div style="position:absolute;left:52px;top:55.4px;width:143.3px;text-align:center;white-space:nowrap;font-size:15.8px;line-height:1;color:#f4f4f4">Training Manual</div>
<div style="position:absolute;left:52px;top:75.6px;width:143.3px;text-align:center;white-space:nowrap;font-size:7px;font-weight:700;letter-spacing:0.45px;line-height:1;color:#e9a23c">OFFICE 24X7</div>
<div style="position:absolute;left:52px;top:99px;width:143.3px;height:123.4px;overflow:hidden"><svg width="143.3" height="123.4" viewBox="0 0 144 124" preserveAspectRatio="none" style="position:absolute;left:0;top:0">
<defs><filter id="pbt" x="-5%" y="-5%" width="110%" height="110%"><feGaussianBlur stdDeviation="0.55"/></filter></defs>
<g filter="url(#pbt)">
<rect width="144" height="124" fill="#e6e8e9"/>
<rect x="0" y="0" width="144" height="20" fill="#d3d6d9"/>
<rect x="20" y="5" width="124" height="1.2" fill="#eef0f1"/>
<rect x="27" y="11.5" width="117" height="1.6" fill="#a9adb1"/>
<rect x="27" y="13" width="117" height="8" fill="#e0e2e4"/>
<rect x="27" y="20" width="117" height="1.2" fill="#c9ccd0"/>
<rect x="27" y="21" width="117" height="55" fill="#eceeee"/>
<g fill="#b6babd"><rect x="40.5" y="21" width="1.6" height="55"/><rect x="62" y="21" width="1.4" height="55"/><rect x="85" y="21" width="1.6" height="55"/><rect x="109.5" y="21" width="1.6" height="55"/><rect x="136" y="21" width="1.6" height="55"/></g>
<rect x="0" y="0" width="25" height="15" fill="#dce4e4"/>
<rect x="0" y="15" width="25" height="48" fill="#a8baba"/>
<rect x="0" y="22" width="25" height="8" fill="#93a5a6"/>
<rect x="2" y="44" width="16" height="16" fill="#dce6e6"/>
<rect x="24" y="16" width="4" height="58" fill="#78838a"/>
<rect x="24" y="39" width="6" height="16" fill="#9e8a6c"/>
<rect x="28" y="38" width="3" height="34" fill="#8a9399"/>
<rect x="45" y="58" width="10" height="10" fill="#2d3035"/>
<rect x="109" y="57" width="9" height="8" fill="#2d3035"/>
<rect x="121" y="58" width="23" height="9" fill="#2a2d33"/>
<rect x="0" y="62" width="144" height="12" fill="#8f8e8a"/>
<rect x="0" y="66" width="48" height="44" fill="#27292e"/>
<rect x="0" y="62" width="24" height="6" fill="#a7b8b8"/>
<rect x="84" y="74" width="40" height="8" fill="#a6a29a"/>
<rect x="48" y="72" width="26" height="3" fill="#dcd8cf"/>
<rect x="48" y="75" width="26" height="32" fill="#d8b25b"/>
<rect x="72" y="87" width="18" height="2" fill="#e8e4da"/>
<rect x="72" y="89" width="18" height="22" fill="#d9b35e"/>
<rect x="117" y="88" width="27" height="2" fill="#e8e4da"/>
<rect x="117" y="90" width="27" height="19" fill="#dab560"/>
<rect x="114" y="74" width="14" height="15" fill="#c9c5bd"/><rect x="128" y="60" width="16" height="30" fill="#292b30"/>
<rect x="108" y="72" width="10" height="14" fill="#3a3c40"/>
<!-- standing woman 1 -->
<path d="M68 50 Q67 37 77 36 Q86 37 87 48 L88 62 L70 64Z" fill="#161616"/>
<ellipse cx="78" cy="48.5" rx="5" ry="7" fill="#d6ab94"/>
<path d="M73 46.5 H83.5" stroke="#333" stroke-width="0.6"/>
<path d="M68 60 Q78 55 88 60 L89 88 L72 88 Q66 80 68 60Z" fill="#2a4a92"/>
<path d="M60 76 Q70 80 82 76 L84 80 Q70 86 58 80Z" fill="#d9ae96"/>
<!-- standing woman 2 -->
<path d="M88.5 46 Q89 35 97 35 Q106 37 107 50 L110 66 L94 66 L93 58Z" fill="#1d1613"/>
<ellipse cx="93.6" cy="49.5" rx="4" ry="6.2" fill="#d9ad92"/>
<path d="M98 58 Q106 55 112 60 L112 74 L98 74Z" fill="#ece8e2"/>
<!-- laptop -->
<path d="M54 53 L79 53 L80 71 L55 71Z" fill="#c8c9cb"/>
<rect x="52" y="70" width="34" height="2" fill="#a4a6a9"/>
<circle cx="66.5" cy="61.5" r="1.5" fill="#f2f2f2"/>
<!-- seated woman left -->
<path d="M20 84 Q18 66 30 61 Q42 58 50 64 L44 90 L24 94Z" fill="#6b4434"/>
<path d="M20 78 Q14 84 18 92 L24 90Z" fill="#5a3a2c"/>
<ellipse cx="44.5" cy="76" rx="7.6" ry="10.2" fill="#dcae98"/>
<path d="M36.5 73.5 H53.5" stroke="#1e1e1e" stroke-width="1"/>
<path d="M14 124 L16 100 Q20 85 38 86 Q56 87 62 100 L66 106 Q68 114 64 118 L60 124Z" fill="#2b2d3a"/>
<path d="M60 103 Q70 102 74 108 L73 117 Q66 118 60 114Z" fill="#e0b49c"/>
<g fill="#c98a66"><circle cx="24" cy="100" r="1.2"/><circle cx="36" cy="94" r="1.1"/><circle cx="44" cy="108" r="1.3"/><circle cx="30" cy="114" r="1.1"/><circle cx="52" cy="98" r="1"/><circle cx="56" cy="116" r="1"/><circle cx="20" cy="120" r="1"/><circle cx="48" cy="120" r="1.1"/></g>
<g fill="#7fa7a4"><circle cx="29" cy="92" r="1"/><circle cx="40" cy="116" r="1.1"/><circle cx="50" cy="106" r="0.9"/><circle cx="20" cy="108" r="1"/><circle cx="58" cy="104" r="0.9"/><circle cx="34" cy="104" r="1"/></g>
<g fill="#cfc38a"><circle cx="46" cy="92" r="0.9"/><circle cx="26" cy="106" r="0.9"/><circle cx="58" cy="110" r="0.9"/><circle cx="38" cy="100" r="0.8"/><circle cx="32" cy="121" r="0.9"/></g>
<!-- seated woman right -->
<path d="M90 94 Q88 70 97 63 Q106 58 114 66 Q118 76 116 90 L113 96 L94 98Z" fill="#6e5a4d"/>
<path d="M74 124 L77 106 Q80 94 94 92 L112 92 Q122 94 125 106 L127 124Z" fill="#1f3a78"/>
<path d="M101 93 Q103 100 104 104 Q106 100 107 93Z" fill="#c9a08a"/>
<!-- chairs -->
<path d="M0 103 Q20 101 36 124 L0 124Z" fill="#1d1e22"/>
<path d="M100 112 Q120 106 144 107 L144 124 L96 124Z" fill="#202125"/>
<rect x="58" y="118" width="18" height="6" fill="#e0e0e0"/>
</g>
</svg></div>
<svg style="position:absolute;left:113px;top:242.5px" width="22" height="10" viewBox="0 0 22 10"><path d="M1.5 9.2 L6 0.8 L10.5 9.2Z" fill="#224a8c"/><path d="M10.8 0.8 H13.6 Q16 0.8 16 2.8 Q16 4.2 14.8 4.8 Q16.3 5.3 16.3 7 Q16.3 9.2 13.8 9.2 H10.8Z" fill="#cf3c30"/><path d="M20.4 0.8 V9.2 Q17.8 8.6 16.3 5 Q17.8 1.4 20.4 0.8Z" fill="#f2a945"/></svg>
<div style="position:absolute;left:52px;top:255.2px;width:143.3px;text-align:center;white-space:nowrap;font-size:6.7px;line-height:1;color:#222"><span style="display:inline-block;transform:scaleX(0.86)">ABC University</span></div>
</div></div>
</div>
<!-- PAGE 2 -->
<div class="a" style="left:665.6px;top:217.6px;width:9.4px;height:9.4px;border-radius:50%;background:#e3e7ec"></div><div class="a" style="left:667.7px;top:221.3px;width:1.1px;height:1.1px;border-radius:50%;background:#fbfcfd"></div><div class="a" style="left:669.8px;top:221.3px;width:1.1px;height:1.1px;border-radius:50%;background:#fbfcfd"></div><div class="a" style="left:671.9px;top:221.3px;width:1.1px;height:1.1px;border-radius:50%;background:#fbfcfd"></div>
<div class="t" style="left:667.4px;top:310.8px;font-size:7.6px;color:#3a414c">2</div>
<div class="a" style="left:679.9px;top:215.2px;width:79.5px;height:103px;border-radius:2.5px;background:#f6f6f6;border:1px solid #e6e9ec;overflow:hidden">
<div style="position:absolute;left:15.6px;top:0;width:0.6px;height:103px;background:#f1f1f1"></div>
<div style="position:absolute;left:38.6px;top:0;width:0.6px;height:103px;background:#f1f1f1"></div>
<div style="position:absolute;left:61.6px;top:0;width:0.6px;height:103px;background:#f1f1f1"></div>
<div style="position:absolute;left:0;top:12px;width:80px;height:0.6px;background:#f1f1f1"></div>
<div style="position:absolute;left:0;top:52px;width:80px;height:0.6px;background:#f1f1f1"></div>
<div style="position:absolute;left:0;top:72px;width:80px;height:0.6px;background:#f1f1f1"></div>
<svg style="position:absolute;left:0;top:0" width="30" height="80" viewBox="0 0 30 80" preserveAspectRatio="none">
<defs><filter id="bl2" x="-20%" y="-20%" width="140%" height="140%"><feGaussianBlur stdDeviation="1"/></filter></defs>
<rect width="30" height="80" fill="#e9e7e4"/>
<g filter="url(#bl2)">
<rect x="-5" y="-5" width="40" height="16" fill="#dcd8d2"/>
<rect x="-5" y="10" width="20" height="7" fill="#c9bdb0"/>
<rect x="-5" y="17" width="16" height="3" fill="#5d6370"/>
<rect x="-5" y="20" width="18" height="9" fill="#c8b29c"/>
<rect x="16" y="0" width="14" height="36" fill="#e4e1dc"/>
<rect x="-5" y="29" width="22" height="16" fill="#ebe8e4"/>
<path d="M31 22 L31 62 Q24 68 16 62 L20 36 Q24 26 31 22Z" fill="#dedede"/>
<path d="M3 51 Q9 46 16 48 Q20 53 15 59 Q8 62 4 59Z" fill="#d8b9a2"/>
<path d="M-5 60 L35 57 L35 85 L-5 85Z" fill="#f1f1f1"/>
<path d="M-5 70 L35 64 L35 74 L-5 80Z" fill="#e2e2e2"/>
</g>
<path d="M0.5 43 L10.5 62" stroke="#2f6fd6" stroke-width="1.5"/>
<path d="M0 77 L20 71" stroke="#333" stroke-width="1"/>
</svg>
<div style="position:absolute;left:27.1px;top:16.8px;width:3.2px;height:15.5px;background:#cf3c30"></div>
<div style="position:absolute;left:30.3px;top:13.4px;width:37px;height:19.7px;background:#141414"></div>
<div style="position:absolute;left:34.2px;top:15.6px;font-size:6.7px;font-weight:700;line-height:7.2px;color:#fff;white-space:nowrap"><span class="sx" style="transform:scaleX(0.9)">Table of<br>Contents</span></div>
<div style="position:absolute;left:64.5px;top:20.5px;width:5.6px;height:5.6px;border-radius:50%;background:#f2a945"></div>
<div style="position:absolute;left:34.8px;top:41.8px;width:3px;height:3px;border-radius:50%;background:#f2a945"></div>
<div style="position:absolute;left:34.8px;top:49.6px;width:3px;height:3px;border-radius:50%;background:#f2a945"></div>
<div style="position:absolute;left:34.8px;top:57.3px;width:3px;height:3px;border-radius:50%;background:#f2a945"></div>
<div style="position:absolute;left:34.8px;top:65.3px;width:3px;height:3px;border-radius:50%;background:#f2a945"></div>
<div style="position:absolute;left:34.8px;top:73.1px;width:3px;height:3px;border-radius:50%;background:#f2a945"></div>
<div style="position:absolute;left:34.8px;top:81.1px;width:3px;height:3px;border-radius:50%;background:#f2a945"></div>
<div style="position:absolute;left:39.6px;top:42.8px;width:9px;height:0.8px;background:#8a8a8a"></div>
<div style="position:absolute;left:39.6px;top:50.6px;width:7px;height:0.8px;background:#8a8a8a"></div>
<div style="position:absolute;left:39.6px;top:58.3px;width:11px;height:0.8px;background:#8a8a8a"></div>
<div style="position:absolute;left:39.6px;top:66.3px;width:17px;height:0.8px;background:#8a8a8a"></div>
<div style="position:absolute;left:39.6px;top:74.1px;width:12px;height:0.8px;background:#8a8a8a"></div>
<div style="position:absolute;left:39.6px;top:82.1px;width:20px;height:0.8px;background:#8a8a8a"></div>
<div style="position:absolute;left:7px;top:93.6px;width:66.2px;height:0.6px;background:#c8c8c8"></div>
<div style="position:absolute;left:7px;top:96px;width:5px;height:1.8px;background:#cf3c30"></div>
<div style="position:absolute;left:13px;top:96.3px;width:12px;height:1.1px;background:#8a8a8a"></div>
<div style="position:absolute;left:56px;top:96.3px;width:16px;height:1.1px;background:#8a8a8a"></div>
</div>
<!-- PAGE 3 -->
<div class="a" style="left:665.7px;top:338.1px;width:9.4px;height:9.4px;border-radius:50%;background:#e3e7ec"></div><div class="a" style="left:667.7px;top:341.8px;width:1.1px;height:1.1px;border-radius:50%;background:#fbfcfd"></div><div class="a" style="left:669.8px;top:341.8px;width:1.1px;height:1.1px;border-radius:50%;background:#fbfcfd"></div><div class="a" style="left:671.9px;top:341.8px;width:1.1px;height:1.1px;border-radius:50%;background:#fbfcfd"></div>
<div class="a" style="left:678.8px;top:335.7px;width:80.5px;height:80px;border-radius:2.5px;background:#f6f6f6;border:1px solid #eceef1;overflow:hidden">
<div style="position:absolute;left:17.6px;top:0;width:0.6px;height:80px;background:#f0f0f0"></div>
<div style="position:absolute;left:40.6px;top:0;width:0.6px;height:80px;background:#f0f0f0"></div>
<div style="position:absolute;left:63.6px;top:0;width:0.6px;height:80px;background:#f0f0f0"></div>
<div style="position:absolute;left:0;top:11.5px;width:80px;height:0.6px;background:#f0f0f0"></div>
<div style="position:absolute;left:0;top:31.5px;width:80px;height:0.6px;background:#f0f0f0"></div>
<div style="position:absolute;left:27.9px;top:0;width:3.7px;height:4.7px;background:#cf3c30"></div>
<svg style="position:absolute;left:65.7px;top:0" width="15" height="11" viewBox="0 0 15 11"><path d="M0 0H15V11Z" fill="#224a8c"/></svg>
<div style="position:absolute;left:7.6px;top:16.6px;font-size:7.2px;font-weight:700;line-height:1;color:#111;white-space:nowrap"><span class="sx" style="transform:scaleX(0.86)">Introduction</span></div>
<svg style="position:absolute;left:7.6px;top:29.4px" width="54" height="22" viewBox="0 0 54 22"><g fill="#9c9c9c"><rect x="0.0" y="0.00" width="3.6" height="0.8"/><rect x="4.6" y="0.00" width="4.9" height="0.8"/><rect x="10.5" y="0.00" width="4.2" height="0.8"/><rect x="15.7" y="0.00" width="5.2" height="0.8"/><rect x="21.9" y="0.00" width="5.3" height="0.8"/><rect x="28.2" y="0.00" width="2.8" height="0.8"/><rect x="32.0" y="0.00" width="2.6" height="0.8"/><rect x="35.6" y="0.00" width="6.3" height="0.8"/><rect x="42.8" y="0.00" width="3.7" height="0.8"/><rect x="47.5" y="0.00" width="3.6" height="0.8"/><rect x="0.0" y="2.95" width="7.0" height="0.8"/><rect x="8.0" y="2.95" width="4.6" height="0.8"/><rect x="13.6" y="2.95" width="6.3" height="0.8"/><rect x="20.9" y="2.95" width="4.6" height="0.8"/><rect x="26.5" y="2.95" width="5.4" height="0.8"/><rect x="32.9" y="2.95" width="3.2" height="0.8"/><rect x="37.1" y="2.95" width="5.4" height="0.8"/><rect x="43.4" y="2.95" width="6.4" height="0.8"/><rect x="50.8" y="2.95" width="0.2" height="0.8"/><rect x="0.0" y="5.90" width="5.8" height="0.8"/><rect x="6.8" y="5.90" width="5.5" height="0.8"/><rect x="13.4" y="5.90" width="2.8" height="0.8"/><rect x="17.1" y="5.90" width="5.9" height="0.8"/><rect x="24.1" y="5.90" width="5.2" height="0.8"/><rect x="30.2" y="5.90" width="3.9" height="0.8"/><rect x="35.1" y="5.90" width="2.6" height="0.8"/><rect x="38.7" y="5.90" width="6.4" height="0.8"/><rect x="46.1" y="5.90" width="4.6" height="0.8"/><rect x="51.7" y="5.90" width="0.3" height="0.8"/><rect x="0.0" y="8.85" width="6.5" height="0.8"/><rect x="7.5" y="8.85" width="5.7" height="0.8"/><rect x="14.2" y="8.85" width="6.6" height="0.8"/><rect x="21.8" y="8.85" width="4.3" height="0.8"/><rect x="27.1" y="8.85" width="6.1" height="0.8"/><rect x="34.2" y="8.85" width="4.5" height="0.8"/><rect x="39.7" y="8.85" width="6.7" height="0.8"/><rect x="47.4" y="8.85" width="5.6" height="0.8"/><rect x="0.0" y="11.80" width="2.9" height="0.8"/><rect x="3.9" y="11.80" width="3.1" height="0.8"/><rect x="8.1" y="11.80" width="3.5" height="0.8"/><rect x="12.5" y="11.80" width="6.8" height="0.8"/><rect x="20.4" y="11.80" width="4.5" height="0.8"/><rect x="25.8" y="11.80" width="5.3" height="0.8"/><rect x="32.2" y="11.80" width="3.9" height="0.8"/><rect x="37.0" y="11.80" width="4.8" height="0.8"/><rect x="42.8" y="11.80" width="4.2" height="0.8"/><rect x="48.0" y="11.80" width="4.0" height="0.8"/><rect x="0.0" y="14.75" width="5.1" height="0.8"/><rect x="6.1" y="14.75" width="5.1" height="0.8"/><rect x="12.3" y="14.75" width="6.6" height="0.8"/><rect x="19.8" y="14.75" width="5.6" height="0.8"/><rect x="26.4" y="14.75" width="6.7" height="0.8"/><rect x="34.1" y="14.75" width="6.4" height="0.8"/><rect x="41.4" y="14.75" width="7.0" height="0.8"/><rect x="49.4" y="14.75" width="1.6" height="0.8"/><rect x="0.0" y="17.70" width="3.2" height="0.8"/><rect x="4.2" y="17.70" width="6.4" height="0.8"/><rect x="11.6" y="17.70" width="6.8" height="0.8"/><rect x="19.4" y="17.70" width="6.6" height="0.8"/><rect x="27.0" y="17.70" width="5.1" height="0.8"/><rect x="33.1" y="17.70" width="5.7" height="0.8"/><rect x="39.8" y="17.70" width="3.5" height="0.8"/><rect x="44.2" y="17.70" width="5.8" height="0.8"/><rect x="0.0" y="20.65" width="5.1" height="0.8"/><rect x="6.1" y="20.65" width="3.8" height="0.8"/><rect x="10.9" y="20.65" width="2.8" height="0.8"/><rect x="14.6" y="20.65" width="6.3" height="0.8"/><rect x="22.0" y="20.65" width="7.0" height="0.8"/><rect x="29.9" y="20.65" width="2.9" height="0.8"/></g></svg>
<svg style="position:absolute;left:25.2px;top:58.6px" width="56" height="15" viewBox="0 0 56 15" preserveAspectRatio="none"><rect width="56" height="15" fill="#2a2b2e"/><rect x="4" y="0" width="18" height="7" fill="#b9bcbd"/><rect x="0" y="0" width="4" height="15" fill="#45494c"/><rect x="5" y="8" width="18" height="7" fill="#2b2d4a"/><rect x="10" y="9" width="1.5" height="6" fill="#7d8cc0"/><rect x="15" y="9" width="1.5" height="6" fill="#a9b4d8"/><rect x="24" y="0" width="14" height="9" fill="#6f675c"/><rect x="26" y="9" width="7" height="6" fill="#4a78aa"/><rect x="40" y="0" width="16" height="15" fill="#151618"/></svg>
<div style="position:absolute;left:22.7px;top:66.2px;width:2.5px;height:7px;background:#f2a945"></div>
<div style="position:absolute;left:74.8px;top:51.1px;width:16px;height:16px;border-radius:50%;background:#cf3c30"></div>
</div>
<!-- BOTTOM BAR -->
<div class="a" style="left:662px;top:408.6px;width:106px;height:24.4px;background:#ffffff;border-top:1px solid #eef0f2"></div>
<div class="a" style="left:699.1px;top:412px;width:30.8px;height:16.1px;border-radius:3px;background:#dfe4ea"></div>
<div class="a" style="left:715.1px;top:413px;width:13.8px;height:14px;border-radius:2.5px;background:#ffffff"></div>
<svg class="a" style="left:702.5px;top:414.5px" width="10" height="11" viewBox="0 0 10 11"><g fill="none" stroke="#aab4c0" stroke-width="0.8"><rect x="0.5" y="0.5" width="3.6" height="2.8" rx="0.8"/><rect x="5.5" y="0.5" width="3.6" height="2.8" rx="0.8"/><rect x="0.5" y="4" width="3.6" height="2.8" rx="0.8"/><rect x="5.5" y="4" width="3.6" height="2.8" rx="0.8"/><rect x="0.5" y="7.5" width="3.6" height="2.8" rx="0.8"/><rect x="5.5" y="7.5" width="3.6" height="2.8" rx="0.8"/></g></svg>
<svg class="a" style="left:718.6px;top:414.5px" width="7" height="11" viewBox="0 0 7 11"><g fill="none" stroke="#4a525e" stroke-width="0.9"><rect x="0.5" y="0.5" width="5.8" height="2.8" rx="1.2"/><rect x="0.5" y="4" width="5.8" height="2.8" rx="1.2"/><rect x="0.5" y="7.5" width="5.8" height="2.8" rx="1.2"/></g></svg>

</body></html>
